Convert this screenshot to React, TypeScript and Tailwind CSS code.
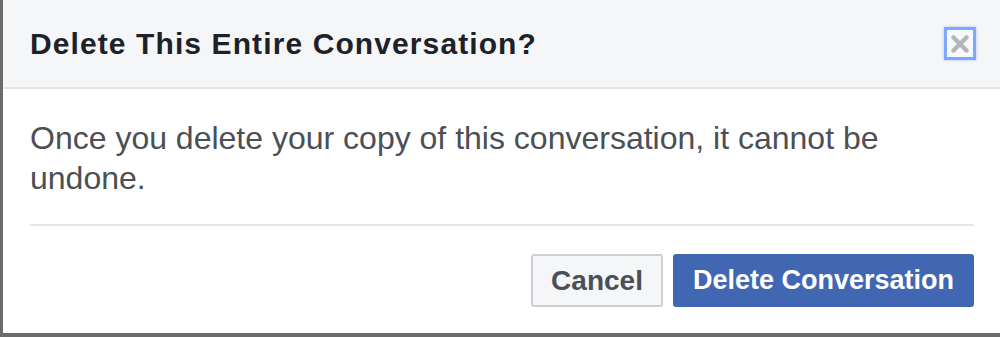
import { useState } from "react";

export default function App() {
  const [open, setOpen] = useState(true);

  if (!open) return <div className="h-[337px] w-[1000px] bg-white" />;

  return (
    <div
      className="flex h-[337px] w-[1000px] flex-col overflow-hidden border-b-[4px] border-l-[3px] border-[#6b6b6b] bg-white text-[#1d2129]"
      style={{ fontFamily: '"Liberation Sans", Arial, Helvetica, sans-serif' }}
    >
      {/* header */}
      <div className="flex h-[89px] shrink-0 items-center justify-between border-b-2 border-[#e5e5e5] bg-[#f5f6f7] pl-[27px] pr-[24px]">
        <h1 className="text-[30px] font-bold leading-none tracking-[1.1px]">
          Delete This Entire Conversation?
        </h1>
        <button
          onClick={() => setOpen(false)}
          className="flex h-[33px] w-[32px] items-center justify-center border-[3px] border-[#7fa6ff] bg-[#f7f8fa] shadow-[0_0_3px_#a9c3ff]"
        >
          <svg width="20" height="20" viewBox="0 0 20 20">
            <path
              d="M3.5 3.5 L16.5 16.5 M16.5 3.5 L3.5 16.5"
              stroke="#b4b6ba"
              strokeWidth="4.5"
              strokeLinecap="round"
            />
          </svg>
        </button>
      </div>

      {/* body */}
      <div className="pl-[27px] pr-[26px]">
        <p className="pt-[29px] pb-[26px] pr-[40px] text-[32px] leading-[40px] text-[#4b4f56]">
          Once you delete your copy of this conversation, it cannot be undone.
        </p>
        <div className="h-[2px] bg-[#e5e5e5]" />
        <div className="flex justify-end gap-[10px] pt-[28px]">
          <button className="h-[53px] rounded-[3px] border-2 border-[#ccd0d5] bg-[#f5f6f7] px-[18px] text-[28px] font-bold text-[#4b4f56]">
            Cancel
          </button>
          <button className="h-[53px] rounded-[3px] border-2 border-[#4267b2] bg-[#4267b2] px-[18px] text-[27px] font-bold text-white">
            Delete Conversation
          </button>
        </div>
      </div>
    </div>
  );
}
